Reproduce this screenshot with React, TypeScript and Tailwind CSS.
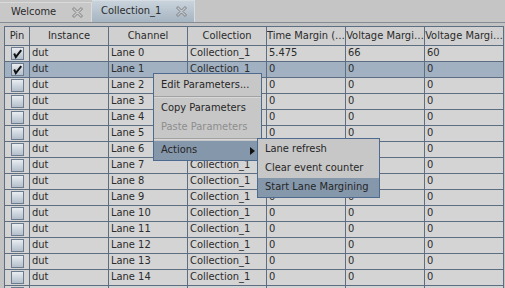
import React from "react";

const FONT = "font-['DejaVu_Sans_Condensed','DejaVu_Sans',sans-serif] font-stretch-condensed";

function CloseIcon() {
  return (
    <svg width="11" height="11" viewBox="0 0 11 11" className="block">
      <polygon
        points="0.5,2 2,0.5 5.5,4 9,0.5 10.5,2 7,5.5 10.5,9 9,10.5 5.5,7 2,10.5 0.5,9 4,5.5"
        fill="#d0d0d0"
        fillOpacity="0.4"
        stroke="#7f7f7f"
        strokeWidth="1"
        strokeLinejoin="round"
      />
    </svg>
  );
}

function Checkbox({ checked }: { checked: boolean }) {
  return (
    <div className="w-[13px] h-[13px] border border-[#6c7c8e] bg-gradient-to-b from-[#e9edf1] to-[#b3bfcb] flex items-center justify-center">
      {checked && (
        <svg width="11" height="11" viewBox="0 0 11 11" className="block">
          <path d="M2.6 6.4 L3.8 9 L8.6 3" fill="none" stroke="#111" strokeWidth="2" strokeLinecap="square" />
        </svg>
      )}
    </div>
  );
}

const COLS = ["Instance", "Channel", "Collection", "Time Margin (…", "Voltage Margi…", "Voltage Margi…"];

type Row = { checked: boolean; selected: boolean; vals: string[] };

const rows: Row[] = Array.from({ length: 16 }, (_, i) => ({
  checked: i < 2,
  selected: i === 1,
  vals: [
    "dut",
    `Lane ${i}`,
    "Collection_1",
    i === 0 ? "5.475" : "0",
    i === 0 ? "66" : "0",
    i === 0 ? "60" : "0",
  ],
}));

function MenuItem({
  label,
  disabled,
  active,
  arrow,
}: {
  label: string;
  disabled?: boolean;
  active?: boolean;
  arrow?: boolean;
}) {
  return (
    <div
      className={
        "h-[19px] flex items-center pl-[7px] pr-[6px] " +
        (active ? "bg-[#8597ab] " : "") +
        (disabled ? "text-[#8e8e8e]" : "text-[#262626]")
      }
    >
      <span className="flex-1 whitespace-nowrap">{label}</span>
      {arrow && (
        <svg width="5" height="8" viewBox="0 0 5 8" className="block">
          <polygon points="0,0 5,4 0,8" fill="#111" />
        </svg>
      )}
    </div>
  );
}

function Separator() {
  return (
    <div className="h-[4px] flex flex-col justify-center">
      <div className="h-[1px] bg-[#a2a2a2]" />
      <div className="h-[1px] bg-[#d8d8d8]" />
    </div>
  );
}

export default function App() {
  return (
    <div className={"relative w-[505px] h-[288px] overflow-hidden bg-[#c3c3c3] text-[11px] text-[#2b2b2b] " + FONT}>
      {/* Tab bar */}
      <div className="h-[23px] flex items-end border-b border-[#848d96] bg-[#c5c5c5]">
        <div className="w-[92px] h-[20px] flex items-center pl-[11px] pr-[8px] bg-[#c8c8c8] border-t border-r border-[#dadada]">
          <span>Welcome</span>
          <span className="ml-auto">
            <CloseIcon />
          </span>
        </div>
        <div className="w-[103px] h-[22px] flex items-center pl-[9px] pr-[7px] bg-gradient-to-b from-[#c9d3dc] to-[#a6b5c2] border-t border-r border-[#d6dde3]">
          <span>Collection_1</span>
          <span className="ml-auto">
            <CloseIcon />
          </span>
        </div>
      </div>

      {/* Table */}
      <div className="mt-[3px] ml-[4px] border-l border-t border-[#5d6e82] w-[500px]">
        <div className="flex h-[19px] bg-[#d0d0d0] border-b border-[#5d6e82]">
          <div className="w-[25px] shrink-0 border-r border-[#5d6e82] flex items-center justify-center">Pin</div>
          {COLS.map((c, i) => (
            <div
              key={i}
              className="w-[79px] shrink-0 border-r border-[#5d6e82] flex items-center justify-center whitespace-nowrap overflow-hidden"
            >
              {c}
            </div>
          ))}
        </div>
        {rows.map((r, ri) => (
          <div
            key={ri}
            className={"flex h-[16px] border-b border-[#5d6e82] " + (r.selected ? "bg-[#a1b1c2]" : "bg-[#d4d4d4]")}
          >
            <div className="w-[25px] shrink-0 border-r border-[#5d6e82] flex items-center justify-center">
              <Checkbox checked={r.checked} />
            </div>
            {r.vals.map((v, ci) => (
              <div
                key={ci}
                className="w-[79px] shrink-0 border-r border-[#5d6e82] flex items-center pl-[2px] whitespace-nowrap overflow-hidden"
              >
                {v}
              </div>
            ))}
          </div>
        ))}
      </div>

      {/* Context menu */}
      <div className="absolute left-[153px] top-[73px] w-[109px] border border-[#4e6a8e] bg-[#c7c7c7] pt-[2px]">
        <MenuItem label="Edit Parameters..." />
        <Separator />
        <MenuItem label="Copy Parameters" />
        <MenuItem label="Paste Parameters" disabled />
        <Separator />
        <MenuItem label="Actions" active arrow />
      </div>

      {/* Submenu */}
      <div className="absolute left-[257px] top-[138px] w-[123px] border border-[#4e6a8e] bg-[#c7c7c7] pt-[1px]">
        <MenuItem label="Lane refresh" />
        <MenuItem label="Clear event counter" />
        <MenuItem label="Start Lane Margining" active />
      </div>
    </div>
  );
}
